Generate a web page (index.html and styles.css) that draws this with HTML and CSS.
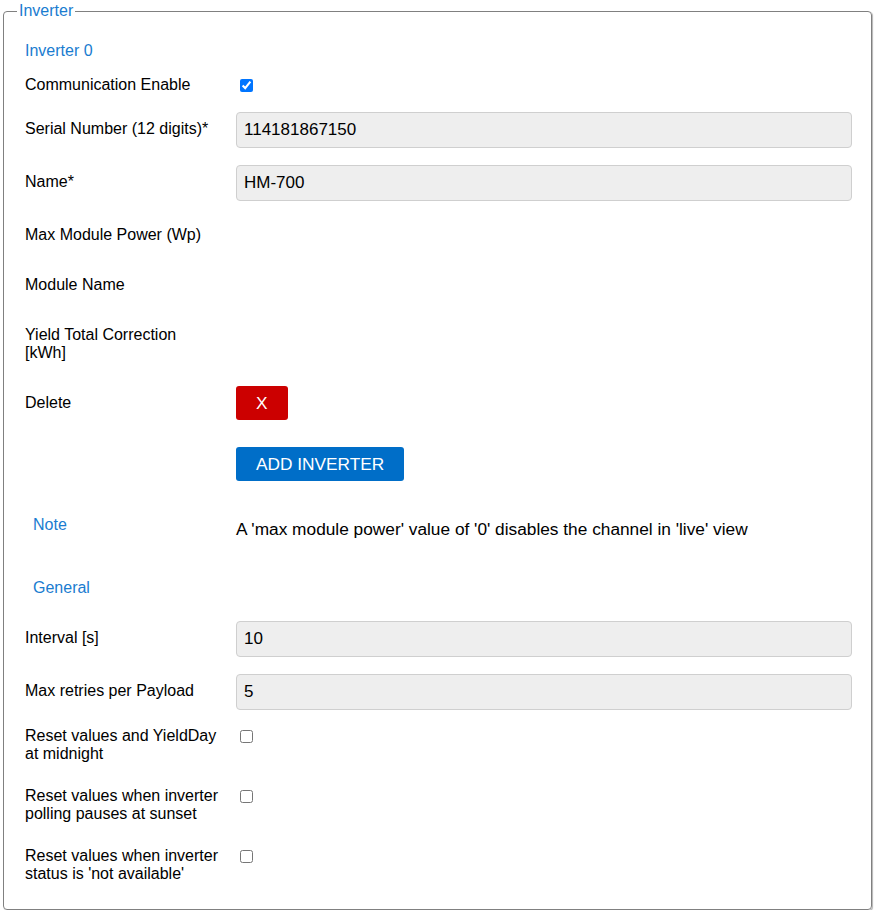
FILE: index.html
```html
<!DOCTYPE html>
<html lang="en">
<head>
<meta charset="utf-8">
<title>Inverter</title>
<link rel="stylesheet" href="styles.css">
</head>
<body>
<fieldset class="panel">
  <legend class="panel-title">Inverter</legend>

  <div class="subhead">Inverter 0</div>

  <div class="row row-check row-first">
    <label class="lbl">Communication Enable</label>
    <div class="val"><input type="checkbox" class="cb" checked></div>
  </div>

  <div class="row">
    <label class="lbl">Serial Number (12 digits)*</label>
    <div class="val"><input type="text" class="txt" value="114181867150"></div>
  </div>

  <div class="row">
    <label class="lbl">Name*</label>
    <div class="val"><input type="text" class="txt" value="HM-700"></div>
  </div>

  <div class="row row-empty">
    <label class="lbl">Max Module Power (Wp)</label>
    <div class="val"></div>
  </div>

  <div class="row row-empty">
    <label class="lbl">Module Name</label>
    <div class="val"></div>
  </div>

  <div class="row row-empty">
    <label class="lbl">Yield Total Correction [kWh]</label>
    <div class="val"></div>
  </div>

  <div class="row row-btn">
    <label class="lbl">Delete</label>
    <div class="val"><button class="btn btn-red">X</button></div>
  </div>

  <div class="row row-btn">
    <label class="lbl"></label>
    <div class="val"><button class="btn btn-blue">ADD INVERTER</button></div>
  </div>

  <div class="row row-note">
    <label class="lbl lbl-blue">Note</label>
    <div class="val val-note">A 'max module power' value of '0' disables the channel in 'live' view</div>
  </div>

  <div class="row row-empty">
    <label class="lbl lbl-blue">General</label>
    <div class="val"></div>
  </div>

  <div class="row">
    <label class="lbl">Interval [s]</label>
    <div class="val"><input type="text" class="txt" value="10"></div>
  </div>

  <div class="row">
    <label class="lbl">Max retries per Payload</label>
    <div class="val"><input type="text" class="txt" value="5"></div>
  </div>

  <div class="row row-check">
    <label class="lbl">Reset values and YieldDay at midnight</label>
    <div class="val"><input type="checkbox" class="cb"></div>
  </div>

  <div class="row row-check">
    <label class="lbl">Reset values when inverter polling pauses at sunset</label>
    <div class="val"><input type="checkbox" class="cb"></div>
  </div>

  <div class="row row-check">
    <label class="lbl">Reset values when inverter status is 'not available'</label>
    <div class="val"><input type="checkbox" class="cb"></div>
  </div>
</fieldset>
</body>
</html>
```

FILE: styles.css
```css
html, body {
  margin: 0;
  padding: 0;
  background: #fff;
}

body {
  font-family: "Liberation Sans", Arial, sans-serif;
  font-size: 16px;
  color: #000;
}

.panel {
  margin: 2px 6px 0 3px;
  padding: 0 19px 2px 21px;
  border: 1px solid #808080;
  border-radius: 4px;
  box-shadow: 1px 1px 1px #b5b5b5;
  min-width: 0;
}

.panel-title {
  color: #1a7cd0;
  padding: 0 2px;
  margin-left: -8px;
  line-height: 18px;
}

.subhead {
  color: #1a7cd0;
  line-height: 18px;
  margin: 22px 0 16px 0;
}

.row {
  display: flex;
  align-items: flex-start;
  margin-bottom: 17px;
}

.lbl {
  flex: none;
  width: 196px;
  padding: 8px 15px 0 0;
  line-height: 18px;
}

.lbl-blue {
  color: #1a7cd0;
  width: 188px;
  padding-left: 8px;
}

.val {
  flex: 1;
  min-width: 0;
}

.row-check {
  margin-bottom: 24px;
}

.row-check .lbl {
  padding-top: 0;
}

.row-first.row-check {
  margin-bottom: 18px;
}

.row-empty {
  padding-bottom: 7px;
}

.row-btn {
  margin-bottom: 27px;
}

.row-note {
  margin-bottom: 33px;
}

.val-note {
  padding-top: 12px;
  line-height: 18px;
  font-size: 17.3px;
}

.cb {
  display: block;
  width: 13px;
  height: 13px;
  margin: 3px 0 0 4px;
}

.txt {
  display: block;
  width: 100%;
  box-sizing: border-box;
  height: 36px;
  margin: 0;
  padding: 0 8px 0 7px;
  border: 1px solid #cfcfcf;
  border-radius: 4px;
  background: #eeeeee;
  font-family: "Liberation Sans", Arial, sans-serif;
  font-size: 17px;
  color: #000;
}

.btn {
  display: block;
  height: 34px;
  margin: 0;
  padding: 0 20px;
  border: none;
  border-radius: 3px;
  color: #fff;
  font-family: "Liberation Sans", Arial, sans-serif;
  font-size: 17.3px;
  cursor: pointer;
}

.btn-red {
  background: #cc0000;
}

.btn-blue {
  background: #006ec8;
}
```
